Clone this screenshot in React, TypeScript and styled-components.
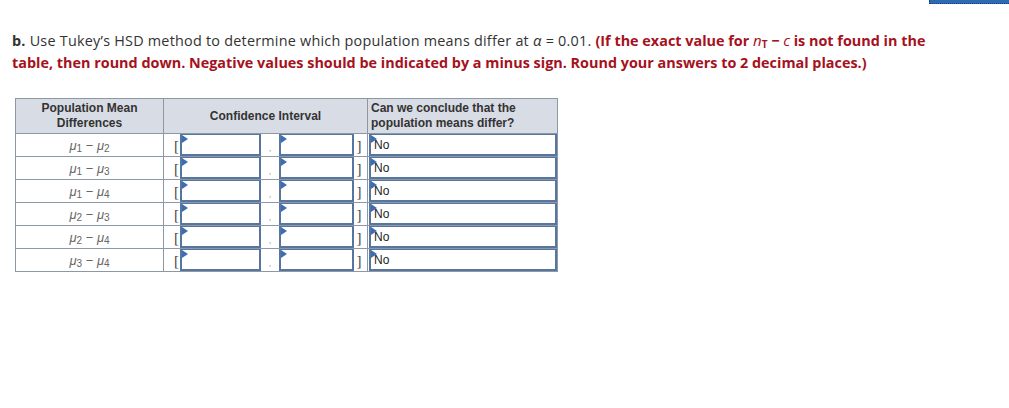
import React from 'react';
import styled, { createGlobalStyle } from 'styled-components';

const GlobalStyle = createGlobalStyle`
  html, body {
    margin: 0;
    padding: 0;
    background: #ffffff;
  }
`;

const colors = {
  text: '#333333',
  red: '#a5111c',
  headerBg: '#d8dce5',
  cellBorder: '#8d98a6',
  inputBorder: '#5676a0',
  marker: '#3c6db3',
};

type Difference = { a: number; b: number };

const differences: Difference[] = [
  { a: 1, b: 2 },
  { a: 1, b: 3 },
  { a: 1, b: 4 },
  { a: 2, b: 3 },
  { a: 2, b: 4 },
  { a: 3, b: 4 },
];

const Page = styled.div`
  padding: 0 0 0 12px;
  font-family: 'Open Sans', 'Lato', sans-serif;
`;

const TopStrip = styled.div`
  display: flex;
  justify-content: flex-end;
  height: 5px;
`;

const TopTab = styled.div`
  width: 79px;
  height: 3px;
  background: #2f6bb5;
  border-bottom: 1px dotted #173f78;
  border-left: 1px dotted #173f78;
`;

const Question = styled.p`
  margin: 24px 0 0 0;
  font-size: 14.4px;
  line-height: 22px;
  color: ${colors.text};
  white-space: nowrap;
  letter-spacing: 0.23px;
`;

const Bold = styled.b`
  font-weight: 700;
`;

const Note = styled.span`
  color: ${colors.red};
  font-weight: 700;
  letter-spacing: 0;
`;

const MathVar = styled.i`
  font-style: italic;
  font-weight: 400;
  font-size: 15px;
`;

const Sub = styled.sub`
  font-size: 10px;
  vertical-align: -2px;
  line-height: 0;
`;

const Table = styled.table`
  margin: 24px 0 0 3px;
  border-collapse: collapse;
  font-family: 'Liberation Sans', Arial, sans-serif;
  font-size: 12px;
  color: ${colors.text};
`;

const HeadCell = styled.th<{ $align?: 'left' | 'center'; $width: number }>`
  background: ${colors.headerBg};
  border: 1px solid ${colors.cellBorder};
  font-weight: 700;
  text-align: ${({ $align }) => $align || 'center'};
  line-height: 15px;
  height: 35px;
  padding: 0 3px;
  width: ${({ $width }) => $width}px;
  box-sizing: border-box;
`;

const Cell = styled.td`
  border: 1px solid ${colors.cellBorder};
  height: 22px;
  padding: 0;
  box-sizing: border-box;
`;

const DiffCell = styled(Cell)`
  text-align: center;
  color: #666666;
  font-family: 'Liberation Sans', Arial, sans-serif;
  font-size: 13px;
`;

const Mu = styled.span`
  font-style: italic;
`;

const IntervalRow = styled.div`
  display: flex;
  align-items: stretch;
  height: 22px;
  padding-left: 9px;
`;

const Bracket = styled.span<{ $w: number }>`
  width: ${({ $w }) => $w}px;
  display: flex;
  align-items: center;
  justify-content: center;
  font-family: 'Liberation Serif', serif;
  font-size: 15px;
  color: #444;
  padding-top: 3px;
  box-sizing: border-box;
`;

const Comma = styled.span`
  width: 18px;
  display: flex;
  align-items: flex-end;
  justify-content: center;
  font-size: 9px;
  color: #999;
  padding-bottom: 3px;
  box-sizing: border-box;
`;

const Field = styled.div<{ $w: number }>`
  position: relative;
  width: ${({ $w }) => $w}px;
  box-sizing: border-box;
  border: 2px solid ${colors.inputBorder};
  border-top-width: 1px;
  background: #fff;
`;

const Marker = styled.span`
  position: absolute;
  left: 0;
  top: 0;
  width: 0;
  height: 0;
  border-top: 4px solid transparent;
  border-bottom: 4px solid transparent;
  border-left: 6px solid ${colors.marker};
`;

const Select = styled.div`
  position: relative;
  height: 22px;
  box-sizing: border-box;
  border: 2px solid ${colors.inputBorder};
  border-top-width: 1px;
  margin-left: 1px;
  padding-left: 3px;
  display: flex;
  align-items: center;
  font-size: 12px;
  color: #222;
  background: #fff;
`;

const SelectCell = styled(Cell)`
  border-left: none;
`;

const Muu = ({ n }: { n: number }) => (
  <>
    <Mu>μ</Mu>
    <Sub>{n}</Sub>
  </>
);

export default function App() {
  return (
    <Page>
      <GlobalStyle />
      <TopStrip>
        <TopTab />
      </TopStrip>
      <Question>
        <Bold>b.</Bold> Use Tukey’s HSD method to determine which population means differ at{' '}
        <MathVar>α</MathVar> = 0.01.{' '}
        <Note>
          (If the exact value for <MathVar>n</MathVar>
          <Sub>T</Sub> − <MathVar>c</MathVar> is not found in the
          <br />
          table, then round down. Negative values should be indicated by a minus sign. Round your
          answers to 2 decimal places.)
        </Note>
      </Question>
      <Table>
        <thead>
          <tr>
            <HeadCell $width={148}>
              Population Mean
              <br />
              Differences
            </HeadCell>
            <HeadCell $width={204}>Confidence Interval</HeadCell>
            <HeadCell $width={190} $align="left">
              Can we conclude that the
              <br />
              population means differ?
            </HeadCell>
          </tr>
        </thead>
        <tbody>
          {differences.map((d) => (
            <tr key={`${d.a}-${d.b}`}>
              <DiffCell>
                <Muu n={d.a} /> − <Muu n={d.b} />
              </DiffCell>
              <Cell>
                <IntervalRow>
                  <Bracket $w={7}>[</Bracket>
                  <Field $w={81}>
                    <Marker />
                  </Field>
                  <Comma>,</Comma>
                  <Field $w={75}>
                    <Marker />
                  </Field>
                  <Bracket $w={10}>]</Bracket>
                </IntervalRow>
              </Cell>
              <SelectCell>
                <Select>
                  <Marker />
                  No
                </Select>
              </SelectCell>
            </tr>
          ))}
        </tbody>
      </Table>
    </Page>
  );
}
